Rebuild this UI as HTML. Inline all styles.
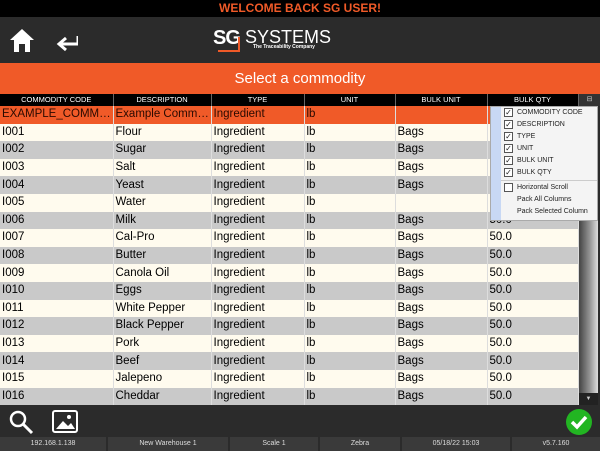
<!DOCTYPE html><html><head><style>
*{margin:0;padding:0;box-sizing:border-box}
body{width:600px;height:451px;overflow:hidden;background:#2b2b2b;font-family:"Liberation Sans",Arial,sans-serif;position:relative}
.a{position:absolute}
table{border-collapse:collapse;table-layout:fixed}
tr{height:17.6px}
td{height:17.6px;line-height:17px;font-size:11.5px;color:#000;padding:0 0 0 2px;border-right:1px solid #ddd;white-space:nowrap;overflow:hidden;text-overflow:ellipsis}
tr.o td{background:#fffbee}tr.e td{background:#c9c9c9}
tr.s td{background:#f05a28;color:#2a0a00}
tr.hr{height:12px}
td.h{height:12px;background:#000;color:#fff;font-size:7.5px;text-align:center;line-height:12px;border-right:1px solid #666;padding:0}
.st{top:437px;height:14px;font-size:7px;color:#ddd;text-align:center;line-height:14px;background:#3a3a3a;border-right:2px solid #2b2b2b}
.m{font-size:7px;color:#222;height:12px;line-height:12px;padding-left:16px;position:relative}
.cb{position:absolute;left:3px;top:1px;width:9px;height:9px;border:1px solid #555;background:#fff;font-size:8px;line-height:8px;text-align:center}
</style></head><body>
<div class="a" style="left:0;top:0;width:600px;height:17px;background:#000;color:#f05a28;font-weight:bold;font-size:12px;text-align:center;line-height:17px">WELCOME BACK SG USER!</div>
<svg class="a" style="left:8px;top:27px" width="70" height="28"><path d="M2 13 L14 2 L26 13 H22 V25 H17 V17 H11 V25 H6 V13Z" fill="#fff"/><path d="M70 9 V17 H52" stroke="#fff" stroke-width="3" fill="none"/><path d="M58 11 L51 17 L58 23" stroke="#fff" stroke-width="3" fill="none"/></svg>
<div class="a" style="left:213px;top:27px;color:#fff;font-weight:bold;font-size:20px;letter-spacing:-1px">SG</div>
<div class="a" style="left:218px;top:37px;width:22px;height:15px;border-right:2px solid #f05a28;border-bottom:2px solid #f05a28"></div>
<div class="a" style="left:245px;top:27px;color:#fff;font-size:18px">SYSTEMS</div>
<div class="a" style="left:253px;top:44px;color:#fff;font-size:5px;font-weight:bold">The Traceability Company</div>
<div class="a" style="left:0;top:63px;width:600px;height:31px;background:#f05a28;color:#fff;font-size:15px;text-align:center;line-height:31px">Select a commodity</div>
<div class="a" style="left:0;top:94px;width:600px;height:12px;background:#000"></div>
<table class="a" style="left:0;top:94px;width:578px">
<colgroup><col style="width:113px"><col style="width:98px"><col style="width:93px"><col style="width:91px"><col style="width:92px"><col style="width:91px"></colgroup>
<tr class="hr"><td class="h">COMMODITY CODE</td><td class="h">DESCRIPTION</td><td class="h">TYPE</td><td class="h">UNIT</td><td class="h">BULK UNIT</td><td class="h">BULK QTY</td></tr>
<tr class="s"><td>EXAMPLE_COMMODITY</td><td>Example Commodity</td><td>Ingredient</td><td>lb</td><td></td><td></td></tr>
<tr class="o"><td>I001</td><td>Flour</td><td>Ingredient</td><td>lb</td><td>Bags</td><td>50.0</td></tr>
<tr class="e"><td>I002</td><td>Sugar</td><td>Ingredient</td><td>lb</td><td>Bags</td><td>50.0</td></tr>
<tr class="o"><td>I003</td><td>Salt</td><td>Ingredient</td><td>lb</td><td>Bags</td><td>50.0</td></tr>
<tr class="e"><td>I004</td><td>Yeast</td><td>Ingredient</td><td>lb</td><td>Bags</td><td>50.0</td></tr>
<tr class="o"><td>I005</td><td>Water</td><td>Ingredient</td><td>lb</td><td></td><td></td></tr>
<tr class="e"><td>I006</td><td>Milk</td><td>Ingredient</td><td>lb</td><td>Bags</td><td>50.0</td></tr>
<tr class="o"><td>I007</td><td>Cal-Pro</td><td>Ingredient</td><td>lb</td><td>Bags</td><td>50.0</td></tr>
<tr class="e"><td>I008</td><td>Butter</td><td>Ingredient</td><td>lb</td><td>Bags</td><td>50.0</td></tr>
<tr class="o"><td>I009</td><td>Canola Oil</td><td>Ingredient</td><td>lb</td><td>Bags</td><td>50.0</td></tr>
<tr class="e"><td>I010</td><td>Eggs</td><td>Ingredient</td><td>lb</td><td>Bags</td><td>50.0</td></tr>
<tr class="o"><td>I011</td><td>White Pepper</td><td>Ingredient</td><td>lb</td><td>Bags</td><td>50.0</td></tr>
<tr class="e"><td>I012</td><td>Black Pepper</td><td>Ingredient</td><td>lb</td><td>Bags</td><td>50.0</td></tr>
<tr class="o"><td>I013</td><td>Pork</td><td>Ingredient</td><td>lb</td><td>Bags</td><td>50.0</td></tr>
<tr class="e"><td>I014</td><td>Beef</td><td>Ingredient</td><td>lb</td><td>Bags</td><td>50.0</td></tr>
<tr class="o"><td>I015</td><td>Jalepeno</td><td>Ingredient</td><td>lb</td><td>Bags</td><td>50.0</td></tr>
<tr class="e"><td>I016</td><td>Cheddar</td><td>Ingredient</td><td>lb</td><td>Bags</td><td>50.0</td></tr>
</table>
<div class="a" style="left:579px;top:94px;width:21px;height:12px;background:#333;color:#ccc;font-size:7px;text-align:center;line-height:12px">⊟</div>
<div class="a" style="left:579px;top:106px;width:19px;height:287px;background:linear-gradient(90deg,#444,#999 60%,#ddd)"></div>
<div class="a" style="left:579px;top:393px;width:19px;height:12px;background:#222;color:#ccc;font-size:6px;text-align:center;line-height:12px">▼</div>
<div class="a" style="left:490px;top:106px;width:108px;height:115px;background:#f4f4f4;border:1px solid #aaa"></div>
<div class="a" style="left:491px;top:107px;width:10px;height:113px;background:#c8d8f4"></div>
<div class="a" style="left:501px;top:107px;width:96px">
<div class="m"><span class="cb">✓</span>COMMODITY CODE</div>
<div class="m"><span class="cb">✓</span>DESCRIPTION</div>
<div class="m"><span class="cb">✓</span>TYPE</div>
<div class="m"><span class="cb">✓</span>UNIT</div>
<div class="m"><span class="cb">✓</span>BULK UNIT</div>
<div class="m"><span class="cb">✓</span>BULK QTY</div>
<div style="border-top:1px solid #ccc;margin:1px 0"></div>
<div class="m"><span class="cb"></span>Horizontal Scroll</div>
<div class="m">Pack All Columns</div>
<div class="m">Pack Selected Column</div>
</div>
<svg class="a" style="left:8px;top:409px" width="80" height="26"><circle cx="10" cy="10" r="7" stroke="#fff" stroke-width="2.5" fill="none"/><path d="M15 15 L24 24" stroke="#fff" stroke-width="3"/><rect x="45" y="2" width="24" height="21" rx="2" stroke="#fff" stroke-width="2" fill="none"/><path d="M48 20 L55 12 L60 17 L63 14 L67 20Z" fill="#fff"/><circle cx="61" cy="8" r="2" fill="#fff"/></svg>
<svg class="a" style="left:564px;top:408px" width="30" height="28"><circle cx="15" cy="14" r="13" fill="#22b522"/><path d="M8 14 L13 19 L22 9" stroke="#fff" stroke-width="3.5" fill="none"/></svg>
<div class="a st" style="left:0;width:108px">192.168.1.138</div>
<div class="a st" style="left:108px;width:122px">New Warehouse 1</div>
<div class="a st" style="left:230px;width:90px">Scale 1</div>
<div class="a st" style="left:320px;width:82px">Zebra</div>
<div class="a st" style="left:402px;width:110px">05/18/22 15:03</div>
<div class="a st" style="left:512px;width:88px;border:0">v5.7.160</div>
</body></html>
